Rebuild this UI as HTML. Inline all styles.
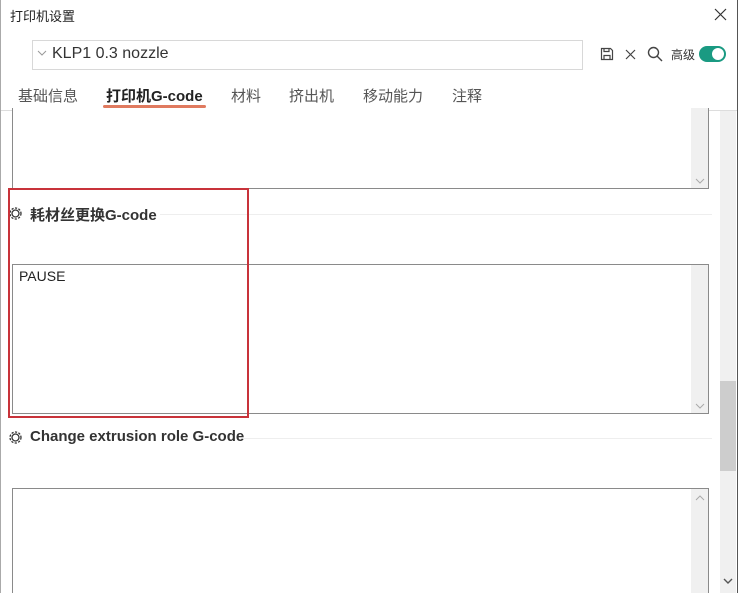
<!DOCTYPE html><html><head><meta charset="utf-8"><style>
html,body{margin:0;width:738px;height:593px;overflow:hidden}
body{background:#fff;font-family:"Liberation Sans","Noto Sans CJK SC",sans-serif;position:relative}
.a{position:absolute}
.ta{position:absolute;left:12px;width:695px;border:1px solid #8a8a8a;background:#fff}
.sb{position:absolute;right:0;top:0;bottom:0;width:17px;background:#f0f0f0}
.h{position:absolute;font-weight:bold;font-size:15px;color:#333}
.tab{position:absolute;top:85px;font-size:15px;color:#555}
</style></head><body>
<div class="a" style="left:0;top:0;width:1px;height:593px;background:#aaa"></div>
<div class="a" style="right:0;top:0;width:1px;height:593px;background:#555"></div>
<div class="a" style="left:10px;top:6px;font-size:13px;color:#222">打印机设置</div>
<svg class="a" style="left:714px;top:8px" width="13" height="13" stroke="#333" stroke-width="1.2"><path d="M1 1l11 11M12 1L1 12"/></svg>
<div class="a" style="left:32px;top:40px;width:549px;height:28px;border:1px solid #d8d8d8"></div>
<svg class="a" style="left:37px;top:50px" width="10" height="6" fill="none" stroke="#999"><path d="M1 1l4 4 4-4"/></svg>
<div class="a" style="left:52px;top:45px;font-size:16px;color:#333">KLP1 0.3 nozzle</div>
<svg class="a" style="left:600px;top:47px" width="14" height="14" viewBox="0 0 14 14" fill="none" stroke="#444" stroke-width="1.2"><path d="M1.5 1.5h9l2 2v9h-11z"/><path d="M4 1.5v3h5v-3M4 12.5v-4h6v4"/></svg>
<svg class="a" style="left:625px;top:49px" width="11" height="11" stroke="#444" stroke-width="1.2"><path d="M1 1l9 9M10 1L1 10"/></svg>
<svg class="a" style="left:647px;top:46px" width="16" height="16" fill="none" stroke="#444" stroke-width="1.4"><circle cx="6.5" cy="6.5" r="5"/><path d="M10 10l5 5"/></svg>
<div class="a" style="left:671px;top:46px;font-size:12px;color:#333">高级</div>
<div class="a" style="left:699px;top:46px;width:27px;height:16px;border-radius:8px;background:#1a9a82"></div>
<div class="a" style="left:712px;top:48px;width:12px;height:12px;border-radius:6px;background:#fff"></div>
<div class="tab" style="left:18px">基础信息</div>
<div class="tab" style="left:106px;color:#222;font-weight:bold">打印机G-code</div>
<div class="a" style="left:103px;top:105px;width:103px;height:3px;border-radius:2px;background:#e07a5f"></div>
<div class="tab" style="left:231px">材料</div>
<div class="tab" style="left:289px">挤出机</div>
<div class="tab" style="left:363px">移动能力</div>
<div class="tab" style="left:452px">注释</div>
<div class="a" style="left:1px;top:110px;width:736px;height:1px;background:#ddd"></div>
<div class="ta" style="top:108px;height:80px;border-top:none"><div class="sb"><svg class="a" style="left:4px;bottom:4px" width="10" height="6" fill="none" stroke="#aaa"><path d="M1 1l4 4 4-4"/></svg></div></div>
<div class="a" style="left:160px;top:214px;width:552px;height:1px;background:#eee"></div>
<svg class="a" style="left:8px;top:206px" width="15" height="15" fill="none" stroke="#333" stroke-width="1.3"><circle cx="7.5" cy="7.5" r="5.5" stroke-dasharray="2.2 1.4"/><circle cx="7.5" cy="7.5" r="3.5"/></svg>
<div class="h" style="left:30px;top:204px">耗材丝更换G-code</div>
<div class="ta" style="top:264px;height:148px"><div class="a" style="left:6px;top:3px;font-size:14px;color:#222">PAUSE</div><div class="sb"><svg class="a" style="left:4px;bottom:4px" width="10" height="6" fill="none" stroke="#aaa"><path d="M1 1l4 4 4-4"/></svg></div></div>
<div class="a" style="left:244px;top:438px;width:468px;height:1px;background:#eee"></div>
<svg class="a" style="left:8px;top:430px" width="15" height="15" fill="none" stroke="#333" stroke-width="1.3"><circle cx="7.5" cy="7.5" r="5.5" stroke-dasharray="2.2 1.4"/><circle cx="7.5" cy="7.5" r="3.5"/></svg>
<div class="h" style="left:30px;top:428px">Change extrusion role G-code</div>
<div class="ta" style="top:488px;height:110px"><div class="sb"><svg class="a" style="left:4px;top:6px" width="10" height="6" fill="none" stroke="#aaa"><path d="M1 5l4-4 4 4"/></svg></div></div>
<div class="a" style="left:720px;top:111px;width:16px;height:482px;background:#f0f0f0"></div>
<div class="a" style="left:720px;top:381px;width:16px;height:90px;background:#cdcdcd"></div>
<svg class="a" style="left:723px;top:578px" width="10" height="6" fill="none" stroke="#555" stroke-width="1.4"><path d="M1 1l4 4 4-4"/></svg>
<div class="a" style="left:8px;top:188px;width:237px;height:226px;border:2px solid #c8333a"></div>
</body></html>
